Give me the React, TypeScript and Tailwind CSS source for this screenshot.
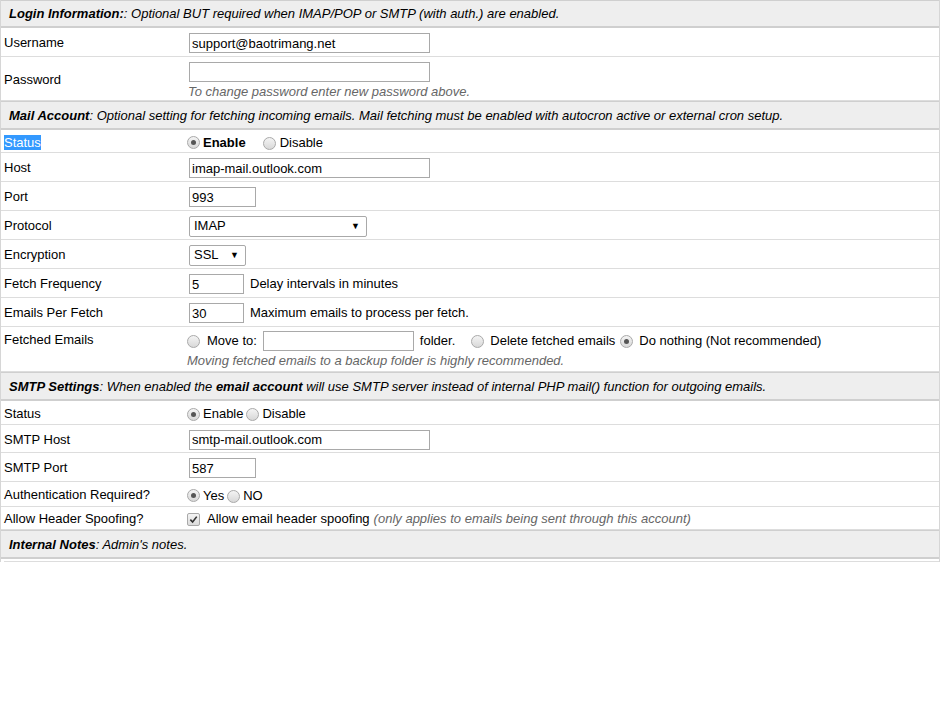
import React from 'react';

const font = { fontFamily: '"Liberation Sans", Arial, sans-serif' };

function Radio({ checked }: { checked?: boolean }) {
  return (
    <span className="inline-flex items-center justify-center w-[13px] h-[13px] rounded-full border border-[#a9a9a9] bg-gradient-to-b from-[#f4f4f4] to-[#d8d8d8] align-middle shrink-0">
      {checked && <span className="w-[5px] h-[5px] rounded-full bg-[#555]" />}
    </span>
  );
}

function Checkbox() {
  return (
    <span className="inline-flex items-center justify-center w-[13px] h-[13px] rounded-[2px] border border-[#a9a9a9] bg-gradient-to-b from-[#f4f4f4] to-[#dcdcdc] shrink-0">
      <svg width="9" height="9" viewBox="0 0 10 10">
        <path d="M1.5 5.2 L4 7.8 L8.6 1.8" fill="none" stroke="#333" strokeWidth="1.8" />
      </svg>
    </span>
  );
}

function TextBox({ value, w }: { value?: string; w: string }) {
  return (
    <input
      readOnly
      value={value || ''}
      className={`${w} h-[20px] border border-[#a9a9a9] px-[2px] text-[13px] text-black outline-none bg-white`}
      style={font}
    />
  );
}

function Select({ value, w }: { value: string; w: string }) {
  return (
    <div className={`${w} relative h-[21px] border border-[#a9a9a9] rounded-[2px] bg-white flex items-center px-[4px] text-[13px]`}>
      <span>{value}</span>
      <span className="absolute right-[6px] top-[3px] text-[9px]">▼</span>
    </div>
  );
}

function Header({ title, h, children }: { title: string; h: string; children: React.ReactNode }) {
  return (
    <div className={`${h} bg-[#eeeeee] border-t border-b-2 border-[#cfcfcf] flex items-center pt-[1px] px-[8px] text-[13px] italic text-black`}>
      <span className="font-bold">{title}</span>
      {children}
    </div>
  );
}

function Row({
  label,
  h,
  top,
  children,
}: {
  label: React.ReactNode;
  h: string;
  top?: boolean;
  children: React.ReactNode;
}) {
  return (
    <div className={`${h} flex pt-[2px] border-b border-[#dddddd] text-[13px] text-black`}>
      <div className={`w-[186px] pl-[3px] flex ${top ? 'items-start pt-[1px]' : 'items-center'}`}>{label}</div>
      <div className="flex-1 flex flex-col justify-center">{children}</div>
    </div>
  );
}

export default function App() {
  return (
    <div className="w-[942px] h-[728px] bg-white" style={font}>
      <div className="w-[940px] border-x border-[#d6d6d6]">
        <Header title="Login Information:" h="h-[28px]">
          <span>: Optional BUT required when IMAP/POP or SMTP (with auth.) are enabled.</span>
        </Header>
        <Row label="Username" h="h-[29px]">
          <div className="ml-[2px]"><TextBox value="support@baotrimang.net" w="w-[241px]" /></div>
        </Row>
        <Row label="Password" h="h-[44px]">
          <div className="pt-[2px] ml-[1px]">
            <div className="ml-[1px]"><TextBox w="w-[241px]" /></div>
            <div className="italic text-[#666] text-[13px] leading-[16px] mt-[2px]">To change password enter new password above.</div>
          </div>
        </Row>

        <Header title="Mail Account" h="h-[29px]">
          <span>: Optional setting for fetching incoming emails. Mail fetching must be enabled with autocron active or external cron setup.</span>
        </Header>
        <Row label={<span className="bg-[#3399ff] text-white leading-[15px]">Status</span>} h="h-[23px]">
          <div className="flex items-center pt-[1px]">
            <Radio checked />
            <span className="font-bold ml-[3px]">Enable</span>
            <span className="ml-[17px]"><Radio /></span>
            <span className="ml-[4px]">Disable</span>
          </div>
        </Row>
        <Row label="Host" h="h-[29px]">
          <div className="ml-[2px]"><TextBox value="imap-mail.outlook.com" w="w-[241px]" /></div>
        </Row>
        <Row label="Port" h="h-[29px]">
          <div className="ml-[2px]"><TextBox value="993" w="w-[67px]" /></div>
        </Row>
        <Row label="Protocol" h="h-[29px]">
          <div className="ml-[2px]"><Select value="IMAP" w="w-[178px]" /></div>
        </Row>
        <Row label="Encryption" h="h-[29px]">
          <div className="ml-[2px]"><Select value="SSL" w="w-[57px]" /></div>
        </Row>
        <Row label="Fetch Frequency" h="h-[29px]">
          <div className="flex items-center ml-[2px]">
            <TextBox value="5" w="w-[55px]" />
            <span className="ml-[6px]">Delay intervals in minutes</span>
          </div>
        </Row>
        <Row label="Emails Per Fetch" h="h-[29px]">
          <div className="flex items-center ml-[2px]">
            <TextBox value="30" w="w-[55px]" />
            <span className="ml-[6px]">Maximum emails to process per fetch.</span>
          </div>
        </Row>
        <Row label="Fetched Emails" h="h-[45px]" top>
          <div className="flex items-center">
            <Radio />
            <span className="ml-[7px]">Move to:</span>
            <span className="ml-[6px]"><TextBox w="w-[151px]" /></span>
            <span className="ml-[6px]">folder.</span>
            <span className="ml-[16px]"><Radio /></span>
            <span className="ml-[6px]">Delete fetched emails</span>
            <span className="ml-[5px]"><Radio checked /></span>
            <span className="ml-[6px]">Do nothing (Not recommended)</span>
          </div>
          <div className="italic text-[#666] text-[13px] leading-[16px] mt-[2px]">Moving fetched emails to a backup folder is highly recommended.</div>
        </Row>

        <Header title="SMTP Settings" h="h-[29px]">
          <span>: When enabled the&nbsp;</span>
          <span className="font-bold">email account</span>
          <span>&nbsp;will use SMTP server instead of internal PHP mail() function for outgoing emails.</span>
        </Header>
        <Row label="Status" h="h-[24px]">
          <div className="flex items-center pt-[1px]">
            <Radio checked />
            <span className="ml-[3px]">Enable</span>
            <span className="ml-[3px]"><Radio /></span>
            <span className="ml-[3px]">Disable</span>
          </div>
        </Row>
        <Row label="SMTP Host" h="h-[28px]">
          <div className="ml-[2px]"><TextBox value="smtp-mail.outlook.com" w="w-[241px]" /></div>
        </Row>
        <Row label="SMTP Port" h="h-[29px]">
          <div className="ml-[2px]"><TextBox value="587" w="w-[67px]" /></div>
        </Row>
        <Row label="Authentication Required?" h="h-[25px]">
          <div className="flex items-center pt-[1px]">
            <Radio checked />
            <span className="ml-[3px]">Yes</span>
            <span className="ml-[3px]"><Radio /></span>
            <span className="ml-[3px]">NO</span>
          </div>
        </Row>
        <Row label="Allow Header Spoofing?" h="h-[23px]">
          <div className="flex items-center">
            <Checkbox />
            <span className="ml-[7px]">Allow email header spoofing</span>
            <span className="ml-[4px] italic text-[#666]">(only applies to emails being sent through this account)</span>
          </div>
        </Row>
        <Header title="Internal Notes" h="h-[29px]">
          <span>: Admin's notes.</span>
        </Header>
        <div className="h-[2px]" />
        <div className="ml-[3px] border-t border-[#dddddd]" />
      </div>
    </div>
  );
}
